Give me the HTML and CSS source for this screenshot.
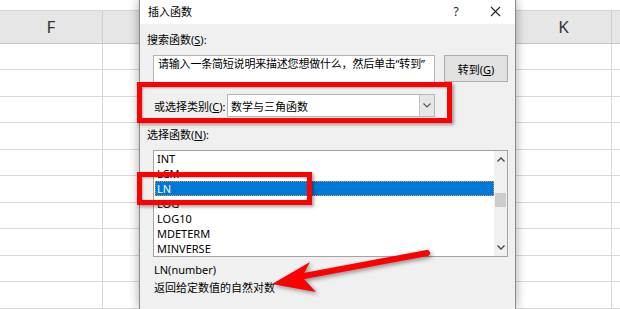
FILE: index.html
```html
<!DOCTYPE html>
<html>
<head>
    <title>插入函数</title>
    <link rel="stylesheet" href="styles.css">
</head>
<body>

    <div class="sheet sheet-left">
        <div class="sheet-top"></div>
        <div class="sheet-head"><div class="col">F</div><div class="col"></div></div>
        <div class="row"><div class="cell"></div><div class="cell"></div></div>
        <div class="row"><div class="cell"></div><div class="cell"></div></div>
        <div class="row"><div class="cell"></div><div class="cell"></div></div>
        <div class="row"><div class="cell"></div><div class="cell"></div></div>
        <div class="row"><div class="cell"></div><div class="cell"></div></div>
        <div class="row"><div class="cell"></div><div class="cell"></div></div>
        <div class="row"><div class="cell"></div><div class="cell"></div></div>
        <div class="row"><div class="cell"></div><div class="cell"></div></div>
        <div class="row"><div class="cell"></div><div class="cell"></div></div>
        <div class="row"><div class="cell"></div><div class="cell"></div></div>
    </div>

    <div class="dialog">
        <div class="titlebar">
            <span class="title">插入函数</span>
            <span class="help">?</span>
            <span class="close">
                <svg width="11" height="11" viewBox="0 0 11 11"><path d="M1 1 L10 10 M10 1 L1 10" stroke="#222" stroke-width="1.1" fill="none"/></svg>
            </span>
        </div>
        <div class="dialog-body">
            <div class="label">搜索函数(<u>S</u>):</div>
            <div class="search-row">
                <div class="search-input">请输入一条简短说明来描述您想做什么，然后单击“转到”</div>
                <button class="btn">转到(<u>G</u>)</button>
            </div>
            <div class="category-row">
                <span class="category-label">或选择类别(<u>C</u>):</span>
                <div class="select">
                    <span class="select-text">数学与三角函数</span>
                    <span class="select-arrow">
                        <svg width="8" height="5" viewBox="0 0 8 5"><path d="M0.5 0.5 L4 4 L7.5 0.5" stroke="#555" stroke-width="1.1" fill="none"/></svg>
                    </span>
                </div>
            </div>
            <div class="label label-list">选择函数(<u>N</u>):</div>
            <div class="listbox">
                <ul class="items">
                    <li>INT</li>
                    <li>LCM</li>
                    <li class="selected">LN</li>
                    <li>LOG</li>
                    <li>LOG10</li>
                    <li>MDETERM</li>
                    <li>MINVERSE</li>
                </ul>
                <div class="scrollbar">
                    <div class="sb-btn">
                        <svg width="8" height="5" viewBox="0 0 8 5"><path d="M0.5 4.5 L4 1 L7.5 4.5" stroke="#444" stroke-width="1.3" fill="none"/></svg>
                    </div>
                    <div class="sb-track"><div class="sb-thumb"></div></div>
                    <div class="sb-btn">
                        <svg width="8" height="5" viewBox="0 0 8 5"><path d="M0.5 0.5 L4 4 L7.5 0.5" stroke="#444" stroke-width="1.3" fill="none"/></svg>
                    </div>
                </div>
            </div>
            <div class="syntax">LN(number)</div>
            <div class="desc">返回给定数值的自然对数</div>
        </div>
    </div>

    <div class="sheet sheet-right">
        <div class="sheet-top"></div>
        <div class="sheet-head"><div class="col">K</div><div class="col"></div></div>
        <div class="row"><div class="cell"></div><div class="cell"></div></div>
        <div class="row"><div class="cell"></div><div class="cell"></div></div>
        <div class="row"><div class="cell"></div><div class="cell"></div></div>
        <div class="row"><div class="cell"></div><div class="cell"></div></div>
        <div class="row"><div class="cell"></div><div class="cell"></div></div>
        <div class="row"><div class="cell"></div><div class="cell"></div></div>
        <div class="row"><div class="cell"></div><div class="cell"></div></div>
        <div class="row"><div class="cell"></div><div class="cell"></div></div>
        <div class="row"><div class="cell"></div><div class="cell"></div></div>
        <div class="row"><div class="cell"></div><div class="cell"></div></div>
    </div>

    <!-- red annotations drawn over the screenshot -->
    <div class="mark mark-category"></div>
    <div class="mark mark-ln"></div>
    <svg class="arrow" width="620" height="309" viewBox="0 0 620 309">
        <line x1="427" y1="253" x2="304" y2="276" stroke="#f00" stroke-width="6" stroke-linecap="round"/>
        <polygon points="272,284 310,262 302,277 316,292" fill="#f00"/>
    </svg>

</body>
</html>
```

FILE: styles.css
```css
body {
    margin: 0;
    width: 620px;
    height: 309px;
    overflow: hidden;
    display: flex;
    position: relative;
    background-color: #ffffff;
    font-family: "Noto Sans", "Noto Sans CJK SC", sans-serif;
    font-size: 11px;
    color: #000;
}

/* spreadsheet behind the dialog */
.sheet {
    display: flex;
    flex-direction: column;
}
.sheet-left {
    width: 139px;
}
.sheet-right {
    flex: 1;
}
.sheet-top {
    height: 10px;
    border-bottom: 1px solid #d4d4d4;
}
.sheet-head {
    height: 32px;
    display: flex;
    background-color: #e6e6e6;
    border-bottom: 1px solid #c6c6c6;
}
.sheet-head .col {
    display: flex;
    justify-content: center;
    align-items: center;
    font-size: 17px;
    color: #333;
    border-right: 1px solid #cfcfcf;
}
.row {
    height: 26.67px;
    box-sizing: border-box;
    display: flex;
    border-bottom: 1px solid #d9d9d9;
}
.cell {
    border-right: 1px solid #d9d9d9;
}
.sheet-left .col:first-child,
.sheet-left .cell:first-child {
    width: 102px;
    flex: none;
}
.sheet-right .col:first-child,
.sheet-right .cell:first-child {
    width: 95px;
    flex: none;
}
.col:last-child,
.cell:last-child {
    flex: 1;
    border-right: none;
}

/* dialog */
.dialog {
    width: 375px;
    flex: none;
    border-left: 1px solid #8c8c8c;
    border-right: 1px solid #8c8c8c;
    background-color: #f0f0f0;
    box-shadow: 0 0 10px rgba(0, 0, 0, 0.35);
    position: relative;
    z-index: 1;
}
.titlebar {
    height: 24px;
    box-sizing: border-box;
    padding: 0 10px 2px 8px;
    display: flex;
    align-items: center;
    background-color: #ffffff;
}
.help {
    margin-left: auto;
    width: 20px;
    text-align: center;
    font-size: 12px;
    color: #222;
}
.close {
    margin-left: 19px;
    width: 20px;
    display: flex;
    justify-content: center;
}
.dialog-body {
    padding: 0 7px;
}
.label {
    margin-top: 8px;
    line-height: 16px;
}
.label-list {
    margin-top: 10px;
}
.search-row {
    margin-top: 7px;
    display: flex;
    align-items: flex-start;
}
.search-input {
    margin-left: 6px;
    width: 282px;
    height: 28px;
    box-sizing: border-box;
    padding: 0 3px 0 4px;
    line-height: 16px;
    letter-spacing: -0.2px;
    border: 1px solid #b5b5b5;
    background-color: #ffffff;
    white-space: nowrap;
    overflow: hidden;
}
.btn {
    margin-left: 9px;
    width: 64px;
    height: 27px;
    padding: 0;
    border: 1px solid #adadad;
    background-color: #e1e1e1;
    font-family: inherit;
    font-size: 11px;
    color: #000;
}
.category-row {
    margin-top: 11px;
    height: 23px;
    display: flex;
    align-items: center;
}
.category-label {
    width: 80px;
    box-sizing: border-box;
    padding-left: 7px;
    white-space: nowrap;
}
.select {
    width: 208px;
    height: 23px;
    box-sizing: border-box;
    display: flex;
    align-items: center;
    border: 1px solid #b5b5b5;
    background-color: #ffffff;
}
.select-text {
    padding-left: 3px;
    flex: 1;
}
.select-arrow {
    width: 15px;
    height: 100%;
    box-sizing: border-box;
    display: flex;
    justify-content: center;
    align-items: center;
    border-left: 1px solid #c4c4c4;
    background-color: #e6e6e6;
}
.listbox {
    margin-top: 7px;
    margin-left: 6px;
    width: 355px;
    height: 107px;
    box-sizing: border-box;
    display: flex;
    border: 1px solid #a3a3a3;
    background-color: #ffffff;
}
.items {
    flex: 1;
    margin: 0;
    padding: 0 0 0 1px;
    list-style: none;
}
.items li {
    height: 15px;
    line-height: 15px;
    padding-left: 2px;
}
.items li.selected {
    background-color: #0078d7;
    color: #ffffff;
    outline: 1px dotted #d9974f;
    outline-offset: -1px;
}
.scrollbar {
    width: 13px;
    display: flex;
    flex-direction: column;
    background-color: #f0f0f0;
}
.sb-btn {
    height: 17px;
    display: flex;
    justify-content: center;
    align-items: center;
}
.sb-track {
    flex: 1;
}
.sb-thumb {
    margin: 25px 1px 0 1px;
    height: 14px;
    background-color: #cdcdcd;
}
.syntax {
    margin-top: 5px;
    padding-left: 7px;
    line-height: 16px;
}
.desc {
    margin-top: 2px;
    padding-left: 7px;
    line-height: 16px;
}

/* annotations */
.mark {
    position: absolute;
    box-sizing: border-box;
    border: 5px solid #ff0000;
    box-shadow: 2px 2px 3px rgba(0, 0, 0, 0.35), inset 1px 1px 2px rgba(0, 0, 0, 0.25);
    z-index: 2;
}
.mark-category {
    left: 137px;
    top: 82px;
    width: 315px;
    height: 41px;
}
.mark-ln {
    left: 137px;
    top: 172px;
    width: 175px;
    height: 33px;
}
.arrow {
    position: absolute;
    left: 0;
    top: 0;
    z-index: 3;
    filter: drop-shadow(2px 2px 2px rgba(0, 0, 0, 0.4));
}
```
